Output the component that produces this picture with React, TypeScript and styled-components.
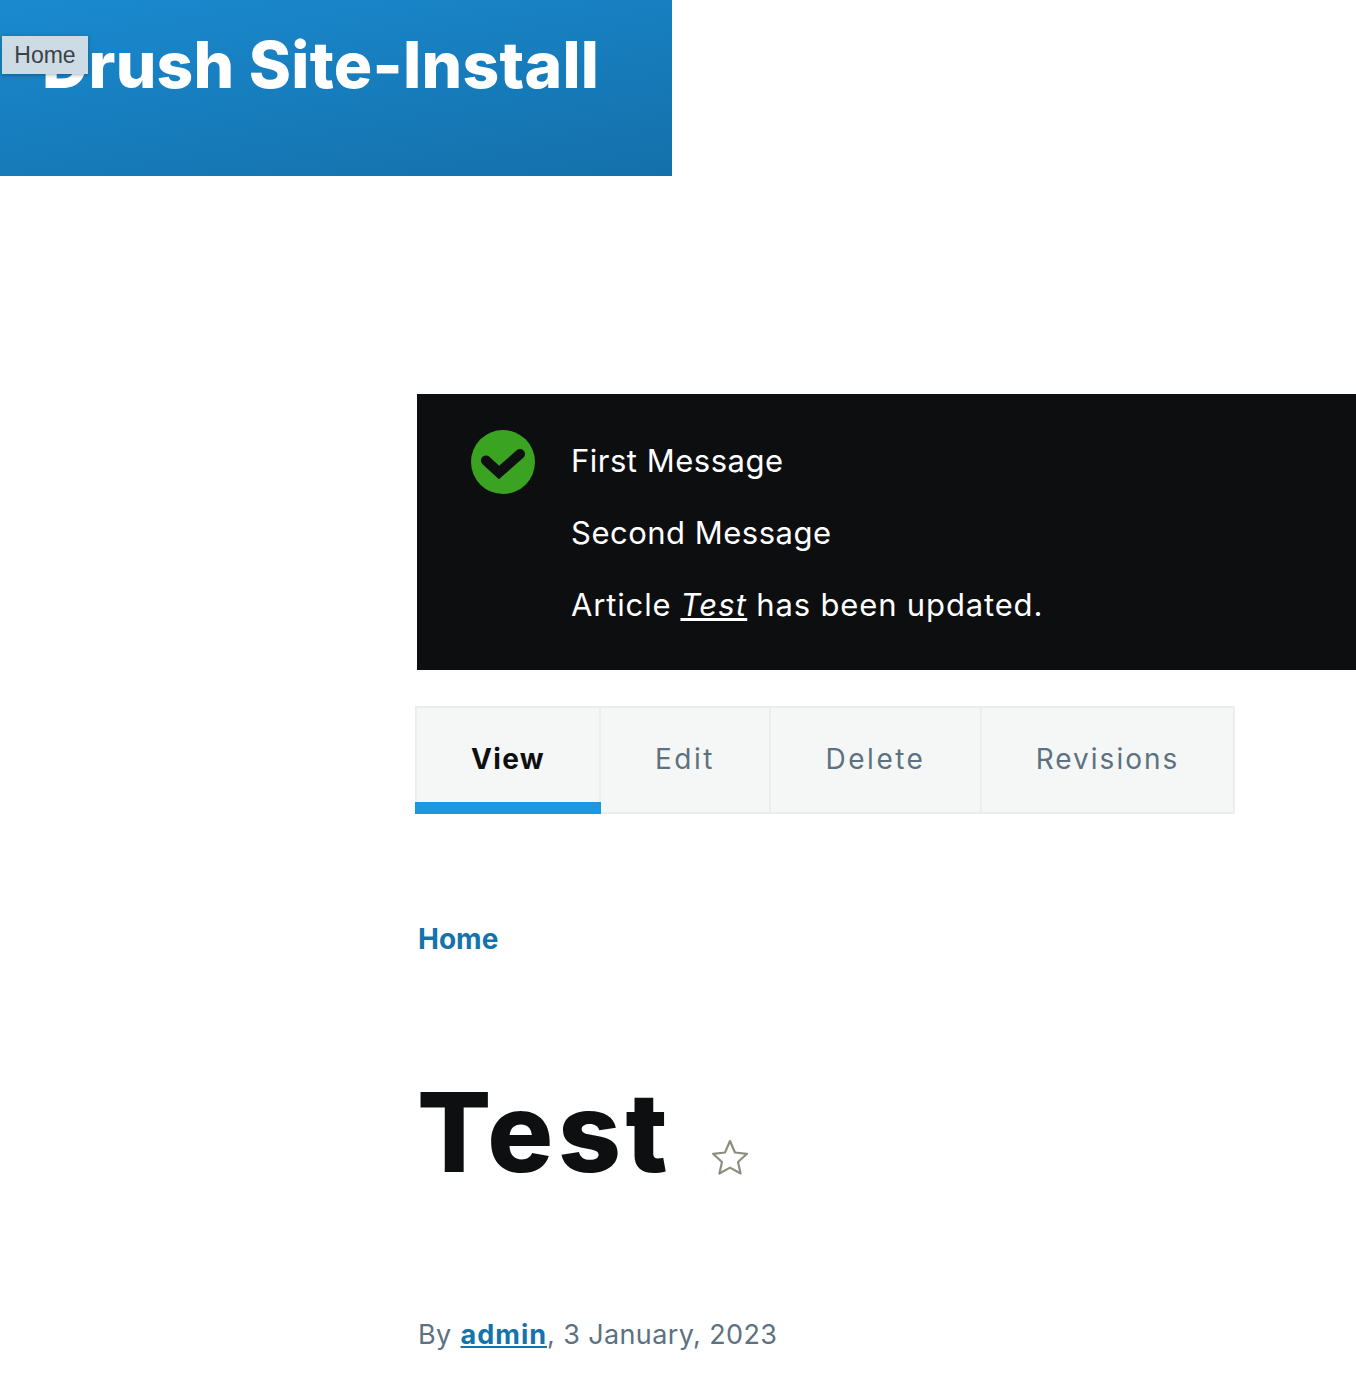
import * as React from "react";
import styled, { createGlobalStyle } from "styled-components";

const fontStack = `Inter, "Liberation Sans", sans-serif`;

const GlobalStyle = createGlobalStyle`
  html, body {
    margin: 0;
    padding: 0;
    background: #fff;
    font-family: ${fontStack};
  }
`;

const Page = styled.div`
  position: relative;
  width: 1356px;
  height: 1384px;
  overflow: hidden;
`;

const SiteHeader = styled.header`
  width: 672px;
  height: 176px;
  box-sizing: border-box;
  padding: 28px 0 0 42px;
  background: linear-gradient(170deg, #1a8ad0 0%, #1470aa 100%);
`;

const SiteName = styled.h1`
  margin: 0;
  color: #fff;
  font-size: 64px;
  line-height: 74px;
  font-weight: 800;
  letter-spacing: 0.28px;
  white-space: nowrap;
`;

const HomeTip = styled.a`
  position: absolute;
  left: 2px;
  top: 36px;
  width: 86px;
  height: 38px;
  box-sizing: border-box;
  display: flex;
  align-items: center;
  justify-content: center;
  background: #cddce4;
  color: #3b4248;
  font-family: "Liberation Sans", Arial, sans-serif;
  font-size: 23px;
  box-shadow: 0 1px 4px rgba(0, 0, 0, 0.3);
`;

const Main = styled.main`
  padding: 218px 0 0 415px;
`;

const Messages = styled.div`
  margin-left: 2px;
  height: 276px;
  box-sizing: border-box;
  display: flex;
  gap: 36px;
  padding: 36px 0 0 54px;
  background: #0c0e10;
  color: #fff;
`;

const StatusIcon = styled.svg`
  flex: none;
  width: 64px;
  height: 64px;
`;

const MessageList = styled.div`
  display: flex;
  flex-direction: column;
  gap: 36px;
  padding-top: 13px;
`;

const Message = styled.div<{ $tracking: number }>`
  font-size: 31px;
  line-height: 36px;
  font-weight: 400;
  letter-spacing: ${(props) => props.$tracking}px;
  white-space: nowrap;
`;

const MessageLink = styled.a`
  display: inline-block;
  margin: 0 9px 0 9px;
  font-style: italic;
  letter-spacing: 1.2px;
  text-decoration: underline;
  color: #fff;
`;

const Tabs = styled.nav`
  display: flex;
  width: 820px;
  height: 108px;
  margin-top: 36px;
`;

const Tab = styled.a<{ $width: number; $tracking: number; $active?: boolean }>`
  position: relative;
  width: ${(props) => props.$width}px;
  box-sizing: border-box;
  display: flex;
  align-items: flex-start;
  justify-content: center;
  padding-top: 35px;
  background: #f5f7f7;
  border: 2px solid #ebedef;
  border-left-width: ${(props) => (props.$active ? 2 : 0)}px;
  color: ${(props) => (props.$active ? "#0d0f11" : "#5d7180")};
  font-size: 28px;
  line-height: 32px;
  font-weight: ${(props) => (props.$active ? 700 : 400)};
  letter-spacing: ${(props) => props.$tracking}px;
`;

const ActiveBar = styled.span`
  position: absolute;
  left: -2px;
  right: -2px;
  bottom: -2px;
  height: 12px;
  background: #1b98e0;
`;

const Breadcrumb = styled.a`
  display: block;
  margin: 108px 0 0 3px;
  color: #1473ab;
  font-size: 28px;
  line-height: 34px;
  font-weight: 700;
`;

const TitleRow = styled.div`
  display: flex;
  align-items: flex-end;
  margin: 116px 0 0 2px;
`;

const PageTitle = styled.h2`
  margin: 0;
  color: #0d0f11;
  font-size: 110px;
  line-height: 120px;
  font-weight: 800;
  letter-spacing: 4.5px;
`;

const StarIcon = styled.svg`
  width: 38px;
  height: 36px;
  margin: 0 0 17px 39px;
`;

const Byline = styled.p`
  margin: 125px 0 0 3px;
  color: #5d7180;
  font-size: 27px;
  line-height: 36px;
  letter-spacing: 0.38px;
`;

const AuthorLink = styled.a`
  margin-left: 1px;
  color: #1473ab;
  font-weight: 700;
  letter-spacing: 1px;
  text-decoration: underline;
`;

export default function App() {
  return (
    <Page>
      <GlobalStyle />
      <SiteHeader>
        <SiteName>Drush Site-Install</SiteName>
      </SiteHeader>
      <HomeTip>Home</HomeTip>
      <Main>
        <Messages>
          <StatusIcon viewBox="0 0 64 64">
            <circle cx="32" cy="32" r="32" fill="#3aa321" />
            <path
              d="M15 30.5 L28 42.5 L49 24"
              fill="none"
              stroke="#0d0f11"
              strokeWidth="10"
              strokeLinecap="round"
              strokeLinejoin="miter"
            />
          </StatusIcon>
          <MessageList>
            <Message $tracking={0.5}>First Message</Message>
            <Message $tracking={0.5}>Second Message</Message>
            <Message $tracking={0.85}>
              Article<MessageLink>Test</MessageLink>has been updated.
            </Message>
          </MessageList>
        </Messages>
        <Tabs>
          <Tab $width={186} $tracking={1.3} $active>
            View
            <ActiveBar />
          </Tab>
          <Tab $width={170} $tracking={2.5}>
            Edit
          </Tab>
          <Tab $width={211} $tracking={2.5}>
            Delete
          </Tab>
          <Tab $width={253} $tracking={2}>
            Revisions
          </Tab>
        </Tabs>
        <Breadcrumb>Home</Breadcrumb>
        <TitleRow>
          <PageTitle>Test</PageTitle>
          <StarIcon viewBox="0 0 38 36">
            <path
              d="M19 2 L24 13.5 L36 14.8 L27 23 L29.6 34.5 L19 28.6 L8.4 34.5 L11 23 L2 14.8 L14 13.5 Z"
              fill="none"
              stroke="#8e8e7e"
              strokeWidth="2.2"
              strokeLinejoin="round"
            />
          </StarIcon>
        </TitleRow>
        <Byline>
          By <AuthorLink>admin</AuthorLink>, 3 January, 2023
        </Byline>
      </Main>
    </Page>
  );
}
